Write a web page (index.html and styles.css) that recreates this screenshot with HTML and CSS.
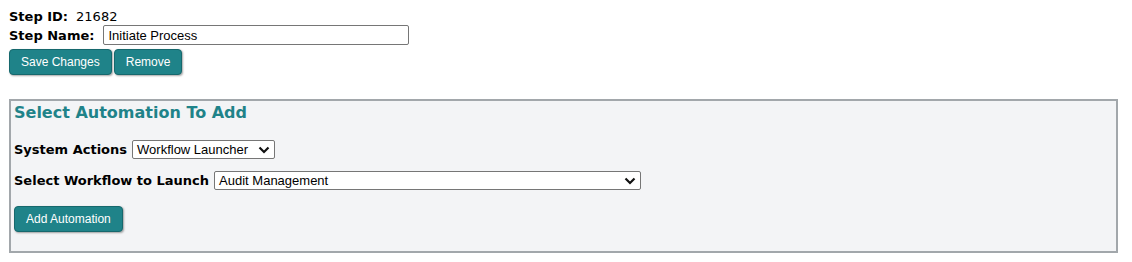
FILE: index.html
```html
<!DOCTYPE html>
<html>
<head>
<meta charset="utf-8">
<link rel="stylesheet" href="styles.css">
</head>
<body>
<div class="step">
  <div class="row"><span class="lbl">Step ID:</span><span class="val">21682</span></div>
  <div class="row row-name"><span class="lbl">Step Name:</span><input class="name" type="text" value="Initiate Process"></div>
  <div class="btns"><button class="btn">Save Changes</button><button class="btn">Remove</button></div>
</div>
<div class="panel">
  <h2 class="title">Select Automation To Add</h2>
  <div class="field"><span class="lbl">System Actions</span><span class="sel sel-sys">Workflow Launcher<svg class="chev" viewBox="0 0 12 8"><path d="M1.5 1.5 L6 6 L10.5 1.5" fill="none" stroke="#111" stroke-width="2.2"/></svg></span></div>
  <div class="field"><span class="lbl">Select Workflow to Launch</span><span class="sel sel-wf">Audit Management<svg class="chev" viewBox="0 0 12 8"><path d="M1.5 1.5 L6 6 L10.5 1.5" fill="none" stroke="#111" stroke-width="2.2"/></svg></span></div>
  <div class="add"><button class="btn btn-add">Add Automation</button></div>
</div>
</body>
</html>
```
FILE: styles.css
```css
body {
  margin: 0;
  padding: 8px 14px 8px 9px;
  font-family: "DejaVu Sans", Verdana, sans-serif;
  font-size: 13px;
  color: #000;
  background: #fff;
}
.step { display: flex; flex-direction: column; }
.row { height: 16px; display: flex; align-items: center; white-space: pre; }
.row-name { height: 22px; }
.lbl { font-weight: bold; }
.val { margin-left: 8px; }
.name {
  margin-left: 9px;
  width: 306px;
  height: 20px;
  box-sizing: border-box;
  border: 1px solid #767676;
  border-radius: 2px;
  padding: 0 4px;
  font-family: "Liberation Sans", Arial, sans-serif;
  font-size: 13px;
  color: #000;
}
.btns { display: flex; gap: 2px; margin-top: 3px; }
.btn {
  background: #1f8389;
  color: #fff;
  border: 1px solid #16686d;
  border-radius: 4px;
  font-family: "Liberation Sans", Arial, sans-serif;
  font-size: 12px;
  height: 26px;
  padding: 0 11px;
  box-shadow: 1px 1px 2px rgba(0,0,0,0.35);
}
.panel {
  margin-top: 24px;
  border: 2px solid #a2a7ab;
  background: #f3f4f6;
  padding: 0 4px 18px 3px;
  height: 154px;
  box-sizing: border-box;
}
.title {
  margin: 0;
  color: #1f8389;
  font-size: 16px;
  font-weight: bold;
  line-height: 24px;
}
.field { display: flex; align-items: center; margin-top: 15px; height: 19px; }
.sel {
  margin-left: 5px;
  display: inline-flex;
  align-items: center;
  justify-content: space-between;
  box-sizing: border-box;
  height: 19px;
  background: #fff;
  border: 1px solid #767676;
  border-radius: 2px;
  padding: 0 4px;
  font-family: "Liberation Sans", Arial, sans-serif;
  font-size: 13px;
}
.sel-sys { width: 143px; }
.sel-wf { width: 427px; }
.field + .field { margin-top: 12px; }
.chev { width: 12px; height: 8px; margin-left: 6px; }
.add { margin-top: 16px; }
.btn-add { padding: 0 11px; }
```
